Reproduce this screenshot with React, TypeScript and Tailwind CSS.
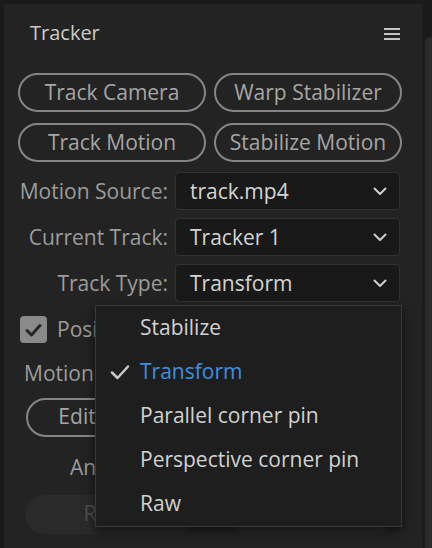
import React from "react";

const font = { fontFamily: '"Open Sans", "Noto Sans", sans-serif' };

function PillButton({ label, className = "" }: { label: string; className?: string }) {
  return (
    <button
      className={
        "h-[39px] rounded-full border-2 border-[#858585] text-[21px] text-[#a6a6a6] flex items-center justify-center " +
        className
      }
    >
      {label}
    </button>
  );
}

function Chevron() {
  return (
    <svg width="14" height="9" viewBox="0 0 14 9" fill="none">
      <path d="M1.5 1.5 L7 7 L12.5 1.5" stroke="#cfcfcf" strokeWidth="2" strokeLinecap="round" strokeLinejoin="round" />
    </svg>
  );
}

function SelectRow({ label, value }: { label: string; value: string }) {
  return (
    <div className="flex items-center">
      <div className="w-[171px] text-right pr-[7px] text-[21px] text-[#9c9c9c] leading-none whitespace-nowrap">{label}</div>
      <div className="w-[225px] h-[38px] rounded-[4px] border border-[#323232] bg-[#191919] flex items-center justify-between pl-[14px] pr-[12px]">
        <span className="text-[21px] text-[#d4d4d4] leading-none">{value}</span>
        <Chevron />
      </div>
    </div>
  );
}

const menuItems = ["Stabilize", "Transform", "Parallel corner pin", "Perspective corner pin", "Raw"];

export default function App() {
  return (
    <div className="w-[432px] h-[548px] bg-[#1a1a1a] flex overflow-hidden" style={font}>
      <div className="w-[4px]" />
      <div className="relative mt-[4px] w-[418px] bg-[#232323] flex flex-col">
        {/* header */}
        <div className="h-[56px] flex items-center justify-between pl-[26px] pr-[22px] pt-[1px]">
          <span className="text-[20px] text-[#cbcbcb]">Tracker</span>
          <div className="flex flex-col gap-[3px] pt-[2px]">
            <span className="block w-[16px] h-[2px] bg-[#c4c4c4]" />
            <span className="block w-[16px] h-[2px] bg-[#c4c4c4]" />
            <span className="block w-[16px] h-[2px] bg-[#c4c4c4]" />
          </div>
        </div>

        <div className="pl-[14px] pt-[13px] flex flex-col gap-[11px]">
          <div className="flex gap-[8px]">
            <PillButton label="Track Camera" className="w-[188px]" />
            <PillButton label="Warp Stabilizer" className="w-[188px]" />
          </div>
          <div className="flex gap-[8px]">
            <PillButton label="Track Motion" className="w-[188px]" />
            <PillButton label="Stabilize Motion" className="w-[188px]" />
          </div>
        </div>

        <div className="pt-[10px] flex flex-col gap-[8px]">
          <SelectRow label="Motion Source:" value="track.mp4" />
          <SelectRow label="Current Track:" value="Tracker 1" />
          <SelectRow label="Track Type:" value="Transform" />
        </div>

        <div className="pl-[16px] pt-[12px] flex items-center gap-[10px]">
          <div className="w-[27px] h-[27px] rounded-[4px] bg-[#8a8a8a] flex items-center justify-center">
            <svg width="17" height="14" viewBox="0 0 17 14" fill="none">
              <path d="M2 7.5 L6.5 12 L15 2.5" stroke="#262626" strokeWidth="3" strokeLinecap="round" strokeLinejoin="round" />
            </svg>
          </div>
          <span className="text-[21px] text-[#9c9c9c]">Position</span>
        </div>

        <div className="pl-[20px] pt-[17px] text-[21px] text-[#9c9c9c] leading-none">Motion Target:</div>

        <div className="pl-[22px] pt-[14px]">
          <PillButton label="Edit Target" className="w-[170px]" />
        </div>

        <div className="pl-[66px] pt-[20px] text-[21px] text-[#9c9c9c] leading-none">Analyze:</div>

        <div className="pt-[17px] flex pl-[21px] gap-[32px]">
          <button className="w-[171px] h-[39px] rounded-full bg-[#2a2a2a] text-[21px] text-[#4f4f4f]">Reset</button>
          <button className="w-[167px] h-[39px] rounded-full bg-[#2a2a2a] text-[21px] text-[#4f4f4f]">Apply</button>
        </div>

        {/* dropdown menu */}
        <div className="absolute left-[91px] top-[301px] w-[307px] border border-[#3a3a3a] bg-[#1e1e1e] shadow-[0_4px_10px_rgba(0,0,0,0.6)] flex flex-col">
          {menuItems.map((item) => {
            const selected = item === "Transform";
            return (
              <div key={item} className="h-[44px] flex items-center">
                <div className="w-[44px] flex justify-center pl-[4px]">
                  {selected && (
                    <svg width="20" height="16" viewBox="0 0 20 16" fill="none">
                      <path d="M2 8.5 L7.5 14 L18 2.5" stroke="#c8c8c8" strokeWidth="2.5" strokeLinecap="round" strokeLinejoin="round" />
                    </svg>
                  )}
                </div>
                <span className={"text-[21px] " + (selected ? "text-[#3f8fe0]" : "text-[#d2d2d2]")}>{item}</span>
              </div>
            );
          })}
        </div>
      </div>
      <div className="w-[3px] bg-[#1c1c1c]" />
      <div className="flex-1 pt-[37px]">
        <div className="h-full rounded-tl-[6px] bg-[#2b2b2b]" />
      </div>
    </div>
  );
}
